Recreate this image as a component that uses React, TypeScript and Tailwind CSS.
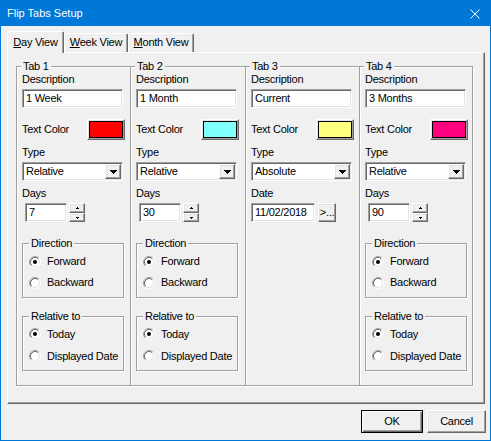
import React from "react";

const sunken =
  "border border-t-[#a0a0a0] border-l-[#a0a0a0] border-r-white border-b-white shadow-[inset_1px_1px_0_#696969,inset_-1px_-1px_0_#e3e3e3] bg-white";
const raised =
  "border border-t-white border-l-white border-r-[#696969] border-b-[#696969] shadow-[inset_-1px_-1px_0_#a0a0a0,inset_1px_1px_0_#e3e3e3] bg-[#f0f0f0]";

function Radio({ checked }: { checked: boolean }) {
  return (
    <svg width="12" height="12" viewBox="0 0 12 12" className="shrink-0">
      <circle cx="6" cy="6" r="4.5" fill="#fff" />
      <path d="M2.11 9.89 A5.5 5.5 0 0 1 9.89 2.11" stroke="#a0a0a0" fill="none" />
      <path d="M9.89 2.11 A5.5 5.5 0 0 1 2.11 9.89" stroke="#ffffff" fill="none" />
      <path d="M2.82 9.18 A4.5 4.5 0 0 1 9.18 2.82" stroke="#696969" fill="none" />
      <path d="M9.18 2.82 A4.5 4.5 0 0 1 2.82 9.18" stroke="#e3e3e3" fill="none" />
      {checked && <circle cx="6" cy="6" r="2" fill="#000" />}
    </svg>
  );
}

function RadioRow({ label, checked, h }: { label: string; checked: boolean; h: string }) {
  return (
    <div className={`flex items-center gap-[6px] pl-[6px] ${h}`}>
      <Radio checked={checked} />
      <span>{label}</span>
    </div>
  );
}

function SmallGroup({
  label,
  className,
  children,
}: {
  label: string;
  className: string;
  children: React.ReactNode;
}) {
  return (
    <fieldset
      className={`w-[102px] min-w-0 border border-[#a0a0a0] shadow-[inset_1px_1px_0_#fff,1px_1px_0_#fff] ${className}`}
    >
      <legend className="ml-[6px] px-[2px] leading-[13px] bg-[#f0f0f0]">{label}</legend>
      {children}
    </fieldset>
  );
}

function DropArrow() {
  return (
    <svg width="7" height="4" viewBox="0 0 7 4" shapeRendering="crispEdges">
      <rect x="0" y="0" width="7" height="1" fill="#000" />
      <rect x="1" y="1" width="5" height="1" fill="#000" />
      <rect x="2" y="2" width="3" height="1" fill="#000" />
      <rect x="3" y="3" width="1" height="1" fill="#000" />
    </svg>
  );
}

function SpinArrow({ up }: { up: boolean }) {
  return (
    <svg width="3" height="2" viewBox="0 0 3 2" shapeRendering="crispEdges">
      {up ? (
        <>
          <rect x="1" y="0" width="1" height="1" fill="#000" />
          <rect x="0" y="1" width="3" height="1" fill="#000" />
        </>
      ) : (
        <>
          <rect x="0" y="0" width="3" height="1" fill="#000" />
          <rect x="1" y="1" width="1" height="1" fill="#000" />
        </>
      )}
    </svg>
  );
}

type ColProps = {
  n: number;
  w: string;
  last?: boolean;
  desc: string;
  swatch: string;
  type: string;
  days?: string;
  date?: string;
};

function TabCol({ n, w, last, desc, swatch, type, days, date }: ColProps) {
  return (
    <fieldset
      className={`h-[326px] min-w-0 shrink-0 border-[#a0a0a0] border-l border-t border-b ${w} ${
        last
          ? "border-r shadow-[inset_1px_1px_0_#fff,1px_1px_0_#fff]"
          : "shadow-[inset_1px_1px_0_#fff,0_1px_0_#fff]"
      }`}
    >
      <legend className="ml-[4px] px-[2px] leading-[13px] bg-[#f0f0f0]">Tab {n}</legend>
      <div className="flex flex-col pl-[5px]">
        <div className="h-[13px]">Description</div>
        <div className={`${sunken} mt-[3px] h-[19px] w-[101px] flex items-center pl-[3px]`}>{desc}</div>
        <div className="mt-[11px] h-[21px] w-[103px] flex items-center justify-between">
          <span>Text Color</span>
          <div className={`${raised} w-[38px] h-[21px] p-[1px]`}>
            <div className={`h-full border border-black ${swatch}`} />
          </div>
        </div>
        <div className="mt-[6px] h-[13px]">Type</div>
        <div className={`${sunken} mt-[3px] h-[19px] w-[101px] flex items-center`}>
          <span className="flex-1 pl-[3px]">{type}</span>
          <div className={`${raised} mr-[1px] w-[16px] h-[15px] flex items-center justify-center`}>
            <DropArrow />
          </div>
        </div>
        {days !== undefined ? (
          <>
            <div className="mt-[6px] h-[13px]">Days</div>
            <div className="mt-[3px] ml-[3px] flex h-[19px]">
              <div className={`${sunken} w-[42px] h-[19px] flex items-center pl-[3px]`}>{days}</div>
              <div className="ml-[2px] w-[16px] h-[19px] flex flex-col">
                <div className={`${raised} h-[10px] flex items-center justify-center`}>
                  <SpinArrow up />
                </div>
                <div className={`${raised} h-[9px] flex items-center justify-center`}>
                  <SpinArrow up={false} />
                </div>
              </div>
            </div>
            <SmallGroup label="Direction" className="mt-[15px] pt-[1px] pb-[4px]">
              <RadioRow label="Forward" checked h="h-[21px]" />
              <RadioRow label="Backward" checked={false} h="h-[21px]" />
            </SmallGroup>
            <SmallGroup label="Relative to" className="mt-[12px] pb-[3px]">
              <RadioRow label="Today" checked h="h-[22px]" />
              <RadioRow label="Displayed Date" checked={false} h="h-[22px]" />
            </SmallGroup>
          </>
        ) : (
          <>
            <div className="mt-[6px] h-[13px]">Date</div>
            <div className="mt-[3px] flex h-[19px]">
              <div className={`${sunken} w-[64px] h-[19px] flex items-center pl-[3px]`}>{date}</div>
              <div className={`${raised} ml-[3px] w-[18px] h-[19px] flex items-center justify-center`}>
                &gt;...
              </div>
            </div>
          </>
        )}
      </div>
    </fieldset>
  );
}

export default function App() {
  return (
    <div className="w-[491px] h-[441px] border border-[#0078d7] bg-[#f0f0f0] flex flex-col font-['Liberation_Sans',Arial,sans-serif] text-[11px] leading-[13px] text-black tracking-[-0.25px] overflow-hidden">
      <div className="h-[25px] shrink-0 bg-[#0078d7] flex items-center justify-between pl-[6px] pr-[10px] text-white tracking-normal">
        <span>Flip Tabs Setup</span>
        <svg width="10" height="10" viewBox="0 0 10 10">
          <path d="M0.5 0.5 L9.5 9.5 M9.5 0.5 L0.5 9.5" stroke="#fff" strokeWidth="1" />
        </svg>
      </div>

      <div className="mt-[5px] ml-[6px] flex items-start h-[21px] shrink-0">
        <div className="relative z-10 w-[57px] h-[22px] bg-[#f0f0f0] border-l border-t border-r border-l-white border-t-white border-r-[#696969] rounded-t-[2px] shadow-[inset_-1px_0_0_#a0a0a0] flex justify-center pt-[4px]">
          <span>
            <u>D</u>ay View
          </span>
        </div>
        <div className="mt-[2px] w-[64px] h-[19px] border-l border-t border-r border-l-white border-t-white border-r-[#696969] rounded-t-[2px] shadow-[inset_-1px_0_0_#a0a0a0] flex justify-center pt-[2px]">
          <span>
            <u>W</u>eek View
          </span>
        </div>
        <div className="mt-[2px] w-[66px] h-[19px] border-l border-t border-r border-l-white border-t-white border-r-[#696969] rounded-t-[2px] shadow-[inset_-1px_0_0_#a0a0a0] flex justify-center pt-[2px]">
          <span>
            <u>M</u>onth View
          </span>
        </div>
      </div>

      <div className="ml-[6px] w-[478px] h-[352px] shrink-0 border border-t-white border-l-white border-r-[#696969] border-b-[#696969] shadow-[inset_-1px_-1px_0_#a0a0a0] pt-[7px] pl-[8px]">
        <div className="flex">
          <TabCol n={1} w="w-[114px]" desc="1 Week" swatch="bg-[#ff0000]" type="Relative" days="7" />
          <TabCol n={2} w="w-[115px]" desc="1 Month" swatch="bg-[#80ffff]" type="Relative" days="30" />
          <TabCol n={3} w="w-[114px]" desc="Current" swatch="bg-[#ffff80]" type="Absolute" date="11/02/2018" />
          <TabCol n={4} w="w-[114px]" last desc="3 Months" swatch="bg-[#ff0080]" type="Relative" days="90" />
        </div>
      </div>

      <div className="mt-[6px] flex justify-end gap-[4px] pr-[4px]">
        <div className="w-[62px] h-[23px] border border-black bg-[#f0f0f0] shadow-[inset_1px_1px_0_#fff,inset_-1px_-1px_0_#696969,inset_-2px_-2px_0_#a0a0a0] flex items-center justify-center">
          OK
        </div>
        <div className={`${raised} w-[59px] h-[23px] flex items-center justify-center`}>Cancel</div>
      </div>
    </div>
  );
}
